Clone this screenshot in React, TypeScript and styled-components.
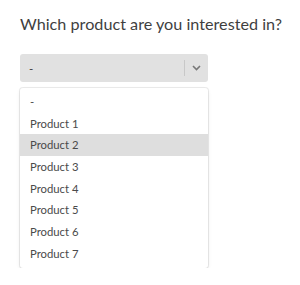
import styled, { createGlobalStyle } from "styled-components";

const GlobalStyle = createGlobalStyle`
    html, body {
        margin: 0;
        padding: 0;
        background: #ffffff;
        font-family: Lato, "Liberation Sans", sans-serif;
    }
`;

const Wrapper = styled.div`
    padding: 11px 20px 0 20px;
    width: 188px;
`;

const Title = styled.h2`
    margin: 0;
    font-size: 16.2px;
    font-weight: 400;
    color: #3f3f3f;
    white-space: nowrap;
    line-height: 26px;
`;

const Select = styled.div`
    margin-top: 17px;
    height: 28px;
    background: #e1e1e1;
    border-radius: 3px;
    display: flex;
    align-items: center;
`;

const Value = styled.span`
    flex: 1;
    padding-left: 9px;
    font-size: 11.5px;
    color: #444;
`;

const Separator = styled.span`
    width: 1px;
    height: 16px;
    background: #c8c8c8;
`;

const Arrow = styled.span`
    width: 23px;
    display: flex;
    justify-content: center;
    align-items: center;
`;

const Menu = styled.ul`
    list-style: none;
    margin: 6px 0 0 0;
    padding: 3px 0;
    background: #fff;
    border-radius: 3px;
    box-shadow: 0 0 0 1px rgba(0, 0, 0, 0.08), 0 2px 4px rgba(0, 0, 0, 0.08);
`;

const Option = styled.li<{ active?: boolean }>`
    height: 21.7px;
    line-height: 21.7px;
    padding-left: 10px;
    font-size: 11.3px;
    color: #4a4a4a;
    background: ${(p) => (p.active ? "#dedede" : "transparent")};
`;

const options = ["-", "Product 1", "Product 2", "Product 3", "Product 4", "Product 5", "Product 6", "Product 7"];

const App = () => {
    return (
        <>
            <GlobalStyle />
            <Wrapper>
                <Title>Which product are you interested in?</Title>
                <Select>
                    <Value>-</Value>
                    <Separator />
                    <Arrow>
                        <svg width="9" height="6" viewBox="0 0 9 6">
                            <path d="M1 1 L4.5 4.5 L8 1" fill="none" stroke="#777" strokeWidth="1.6" />
                        </svg>
                    </Arrow>
                </Select>
                <Menu>
                    {options.map((o) => (
                        <Option key={o} active={o === "Product 2"}>{o}</Option>
                    ))}
                </Menu>
            </Wrapper>
        </>
    );
};

export default App;
